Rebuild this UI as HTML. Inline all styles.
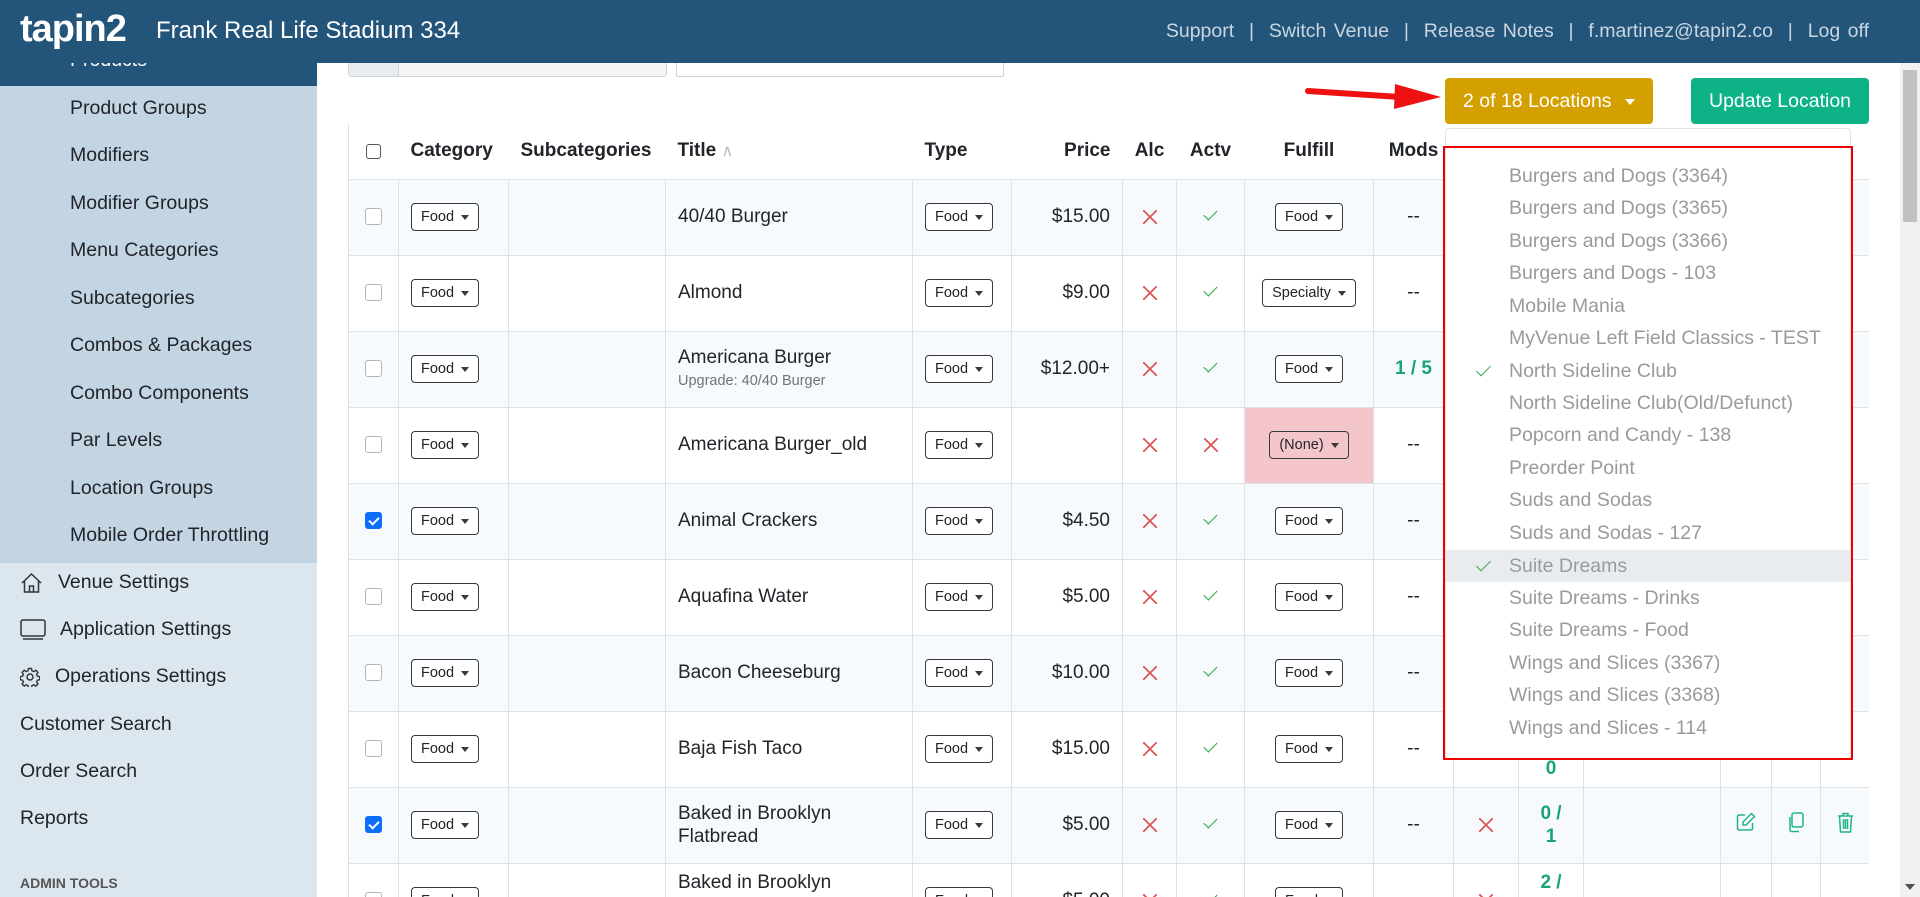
<!DOCTYPE html>
<html><head><meta charset="utf-8">
<style>
*{box-sizing:border-box;margin:0;padding:0}
html,body{width:1920px;height:897px;overflow:hidden;background:#fff;font-family:"Liberation Sans",Arial,sans-serif;color:#212529}
#wrap{position:relative;width:1920px;height:897px;overflow:hidden}
.abs{position:absolute}
#hdr{left:0;top:0;width:1920px;height:63px;background:#235479;z-index:5}
#logo{left:20px;top:8px;font-size:38px;font-weight:bold;color:#fff;letter-spacing:-1px}
#venue{left:156px;top:17px;font-size:24px;color:#fff}
#nav{right:51px;top:20px;font-size:19.5px;color:#c9d6e1;word-spacing:2px}
#side{left:0;top:63px;width:317px;height:834px;background:#dce6ef}
#side .sub{position:absolute;left:0;top:23px;width:317px;height:477px;background:#c3d4e2}
#side .act{position:absolute;left:0;top:0;width:317px;height:23px;background:#235479;overflow:hidden}
.si{position:absolute;font-size:19.5px;color:#212529;white-space:nowrap}
#tw{position:absolute;left:348px;top:124px;width:1521px;height:773px;overflow:hidden}
table{border-collapse:collapse;table-layout:fixed;width:1521px;font-size:19px}
td,th{border:1px solid #dee2e6;height:76px;padding:0 12px;vertical-align:middle;white-space:nowrap;overflow:hidden}
th{height:55px;border-left:none;border-right:none;border-top:none;text-align:left;font-weight:bold;font-size:19px}
tr.o td{background:#f7fafd}
.c{text-align:center}.r{text-align:right}
.cb{display:inline-block;width:17px;height:17px;border:1px solid #adb5bd;border-radius:3px;background:#fff;vertical-align:middle}
.cb.on{background:#0d6efd;border-color:#0d6efd;position:relative}
.cb.on:after{content:"";position:absolute;left:5px;top:2px;width:4px;height:8px;border:solid #fff;border-width:0 2px 2px 0;transform:rotate(45deg)}
.sel{display:inline-block;border:1px solid #343a40;border-radius:4px;font-size:14.5px;padding:4px 9px;line-height:18px;background:#fff}
.sel:after{content:"";display:inline-block;margin-left:7px;vertical-align:middle;border-left:4px solid transparent;border-right:4px solid transparent;border-top:5px solid #343a40}
.x:before{content:"";display:inline-block;width:14px;height:14px;vertical-align:middle;background:linear-gradient(45deg,transparent 46%,#e05656 46%,#e05656 54%,transparent 54%),linear-gradient(-45deg,transparent 46%,#e05656 46%,#e05656 54%,transparent 54%)}
.ck:before{content:"";display:inline-block;width:6px;height:12px;border:solid #28a745;border-width:0 1.5px 1.5px 0;transform:rotate(45deg);margin-top:-6px;vertical-align:middle}
.g{color:#1aa37a;font-weight:bold;font-size:19px}
.sm{font-size:14.5px;color:#6c757d}
#dd{left:1445px;top:128px;width:406px;height:631px;background:#fff;border:1px solid #dee2e6;border-radius:4px;z-index:4}
#red{left:1443px;top:146px;width:410px;height:614px;border:2.5px solid #ee0000;z-index:6}
.di{position:absolute;left:63px;font-size:19.5px;color:#9a9a9a;white-space:nowrap;line-height:32px;height:32px}
.dck{position:absolute;left:34px;top:0;width:7px;height:14px;border:solid #28a745;border-width:0 1.5px 1.5px 0;transform:rotate(45deg)}
</style></head><body><div id="wrap">

<div id="hdr" class="abs">
 <div id="logo" class="abs">tapin2</div>
 <div id="venue" class="abs">Frank Real Life Stadium 334</div>
 <div id="nav" class="abs">Support &nbsp;|&nbsp; Switch Venue &nbsp;|&nbsp; Release Notes &nbsp;|&nbsp; f.martinez@tapin2.co &nbsp;|&nbsp; Log off</div>
</div>

<div id="side" class="abs">
 <div class="act"><div class="si" style="left:70px;top:-14px;color:#fff">Products</div></div>
 <div class="sub"></div>
 <div class="si" style="left:70px;top:34px">Product Groups</div>
 <div class="si" style="left:70px;top:81px">Modifiers</div>
 <div class="si" style="left:70px;top:129px">Modifier Groups</div>
 <div class="si" style="left:70px;top:176px">Menu Categories</div>
 <div class="si" style="left:70px;top:224px">Subcategories</div>
 <div class="si" style="left:70px;top:271px">Combos &amp; Packages</div>
 <div class="si" style="left:70px;top:319px">Combo Components</div>
 <div class="si" style="left:70px;top:366px">Par Levels</div>
 <div class="si" style="left:70px;top:414px">Location Groups</div>
 <div class="si" style="left:70px;top:461px">Mobile Order Throttling</div>
 <svg class="abs" style="left:20px;top:509px" width="23" height="22" viewBox="0 0 23 22" fill="none" stroke="#333" stroke-width="1.5"><path d="M2 11 L11.5 2 L21 11 M4.5 9 V20 H18.5 V9 M9.5 20 V14 H13.5 V20"/></svg>
 <div class="si" style="left:58px;top:508px">Venue Settings</div>
 <svg class="abs" style="left:20px;top:556px" width="26" height="22" viewBox="0 0 26 22" fill="none" stroke="#333" stroke-width="1.5"><rect x="1" y="1" width="24" height="16" rx="2"/><path d="M3 20 H23"/></svg>
 <div class="si" style="left:60px;top:555px">Application Settings</div>
 <svg class="abs" style="left:20px;top:604px" width="20" height="20" viewBox="0 0 20 20" fill="none" stroke="#333" stroke-width="1.4"><circle cx="10" cy="10" r="3"/><path d="M8.5 1.5h3l.5 2.3 1.8.8 2-1.3 2.1 2.1-1.3 2 .8 1.8 2.3.5v3l-2.3.5-.8 1.8 1.3 2-2.1 2.1-2-1.3-1.8.8-.5 2.3h-3l-.5-2.3-1.8-.8-2 1.3-2.1-2.1 1.3-2-.8-1.8-2.3-.5v-3l2.3-.5.8-1.8-1.3-2 2.1-2.1 2 1.3 1.8-.8z"/></svg>
 <div class="si" style="left:55px;top:602px">Operations Settings</div>
 <div class="si" style="left:20px;top:650px">Customer Search</div>
 <div class="si" style="left:20px;top:697px">Order Search</div>
 <div class="si" style="left:20px;top:744px">Reports</div>
 <div class="si" style="left:20px;top:812px;font-size:14px;font-weight:bold;color:#555">ADMIN TOOLS</div>
</div>

<div class="abs" style="left:348px;top:49px;width:319px;height:28px;border:1px solid #ced4da;border-radius:4px;background:#f5f5f5;overflow:hidden"><div style="width:50px;height:28px;background:#e9ecef;border-right:1px solid #ced4da"></div></div>
<div class="abs" style="left:676px;top:49px;width:328px;height:28px;border:1px solid #ced4da;border-radius:2px;background:#fff"></div>

<svg class="abs" style="left:1300px;top:82px" width="150" height="30" viewBox="0 0 150 30"><path d="M8 9 L100 15" stroke="#ee1111" stroke-width="6" stroke-linecap="round"/><path d="M95 2 L141 15 L94 27 Z" fill="#ee1111"/></svg>
<div class="abs" style="left:1445px;top:78px;width:208px;height:46px;background:#d4a000;border-radius:4px;color:#fff;font-size:19.5px;line-height:46px;text-align:center">2 of 18 Locations <span style="display:inline-block;margin-left:8px;vertical-align:middle;border-left:5px solid transparent;border-right:5px solid transparent;border-top:6px solid #fff"></span></div>
<div class="abs" style="left:1691px;top:78px;width:178px;height:46px;background:#0db387;border-radius:4px;color:#fff;font-size:19.5px;line-height:46px;text-align:center">Update Location</div>

<div id="tw"><table>
<colgroup><col style="width:50px"><col style="width:110px"><col style="width:157px"><col style="width:247px"><col style="width:99px"><col style="width:111px"><col style="width:54px"><col style="width:68px"><col style="width:129px"><col style="width:80px"><col style="width:65px"><col style="width:65px"><col style="width:137px"><col style="width:51px"><col style="width:49px"><col style="width:49px"></colgroup>
<tr><th class="c" style="border-left:1px solid #dee2e6"><span class="cb" style="width:15px;height:15px;border-color:#555"></span></th><th>Category</th><th>Subcategories</th><th>Title <span style="color:#bbb;font-weight:normal;font-size:16px">&#x2227;</span></th><th>Type</th><th class="r">Price</th><th class="c">Alc</th><th class="c">Actv</th><th class="c">Fulfill</th><th class="c">Mods</th><th></th><th></th><th></th><th></th><th></th><th></th></tr>

<tr class="o"><td class="c"><span class="cb"></span></td><td><span class="sel">Food</span></td><td></td><td>40/40 Burger</td><td><span class="sel">Food</span></td><td class="r">$15.00</td><td class="c x"></td><td class="c ck"></td><td class="c"><span class="sel">Food</span></td><td class="c">--</td><td class="c x"></td><td class="c g">0</td><td></td><td></td><td></td><td></td></tr>
<tr><td class="c"><span class="cb"></span></td><td><span class="sel">Food</span></td><td></td><td>Almond</td><td><span class="sel">Food</span></td><td class="r">$9.00</td><td class="c x"></td><td class="c ck"></td><td class="c"><span class="sel">Specialty</span></td><td class="c">--</td><td></td><td></td><td></td><td></td><td></td><td></td></tr>
<tr class="o"><td class="c"><span class="cb"></span></td><td><span class="sel">Food</span></td><td></td><td style="line-height:22px">Americana Burger<br><span class="sm">Upgrade: 40/40 Burger</span></td><td><span class="sel">Food</span></td><td class="r">$12.00+</td><td class="c x"></td><td class="c ck"></td><td class="c"><span class="sel">Food</span></td><td class="c g">1 / 5</td><td></td><td></td><td></td><td></td><td></td><td></td></tr>
<tr><td class="c"><span class="cb"></span></td><td><span class="sel">Food</span></td><td></td><td>Americana Burger_old</td><td><span class="sel">Food</span></td><td class="r"></td><td class="c x"></td><td class="c x"></td><td class="c" style="background:#f4c6cb"><span class="sel" style="background:#f4c6cb">(None)</span></td><td class="c">--</td><td></td><td></td><td></td><td></td><td></td><td></td></tr>
<tr class="o"><td class="c"><span class="cb on"></span></td><td><span class="sel">Food</span></td><td></td><td>Animal Crackers</td><td><span class="sel">Food</span></td><td class="r">$4.50</td><td class="c x"></td><td class="c ck"></td><td class="c"><span class="sel">Food</span></td><td class="c">--</td><td></td><td></td><td></td><td></td><td></td><td></td></tr>
<tr><td class="c"><span class="cb"></span></td><td><span class="sel">Food</span></td><td></td><td>Aquafina Water</td><td><span class="sel">Food</span></td><td class="r">$5.00</td><td class="c x"></td><td class="c ck"></td><td class="c"><span class="sel">Food</span></td><td class="c">--</td><td></td><td></td><td></td><td></td><td></td><td></td></tr>
<tr class="o"><td class="c"><span class="cb"></span></td><td><span class="sel">Food</span></td><td></td><td>Bacon Cheeseburg</td><td><span class="sel">Food</span></td><td class="r">$10.00</td><td class="c x"></td><td class="c ck"></td><td class="c"><span class="sel">Food</span></td><td class="c">--</td><td></td><td></td><td></td><td></td><td></td><td></td></tr>
<tr><td class="c"><span class="cb"></span></td><td><span class="sel">Food</span></td><td></td><td>Baja Fish Taco</td><td><span class="sel">Food</span></td><td class="r">$15.00</td><td class="c x"></td><td class="c ck"></td><td class="c"><span class="sel">Food</span></td><td class="c">--</td><td class="c x"></td><td class="c g" style="padding-top:40px">0</td><td class="sm">10/07/20</td><td></td><td></td><td></td></tr>
<tr class="o"><td class="c"><span class="cb on"></span></td><td><span class="sel">Food</span></td><td></td><td style="line-height:23px">Baked in Brooklyn<br>Flatbread</td><td><span class="sel">Food</span></td><td class="r">$5.00</td><td class="c x"></td><td class="c ck"></td><td class="c"><span class="sel">Food</span></td><td class="c">--</td><td class="c x"></td><td class="c g" style="line-height:23px">0 /<br>1</td><td></td>
<td class="c"><svg width="20" height="20" viewBox="0 0 20 20" fill="none" stroke="#20b486" stroke-width="1.5"><path d="M9 3H3a1.5 1.5 0 0 0-1.5 1.5v12A1.5 1.5 0 0 0 3 18h12a1.5 1.5 0 0 0 1.5-1.5V11"/><path d="M15.5 1.5l3 3L10 13H7v-3z"/></svg></td>
<td class="c"><svg width="18" height="21" viewBox="0 0 18 21" fill="none" stroke="#20b486" stroke-width="1.5"><rect x="5" y="1" width="11" height="14" rx="2"/><path d="M3 5v13a1.5 1.5 0 0 0 1.5 1.5H12"/></svg></td>
<td class="c"><svg width="17" height="21" viewBox="0 0 17 21" fill="none" stroke="#20b486" stroke-width="1.5"><path d="M1 4h15M6 4V1.5h5V4M2.5 4l1 16h10l1-16M6.5 7v10M8.5 7v10M10.5 7v10"/></svg></td></tr>
<tr><td class="c"><span class="cb"></span></td><td><span class="sel">Food</span></td><td></td><td style="vertical-align:top;padding-top:8px">Baked in Brooklyn</td><td><span class="sel">Food</span></td><td class="r">$5.00</td><td class="c x"></td><td class="c ck"></td><td class="c"><span class="sel">Food</span></td><td class="c">--</td><td class="c x"></td><td class="c g" style="vertical-align:top;padding-top:8px">2 /</td><td></td><td></td><td></td><td></td></tr>
</table></div>

<div id="dd" class="abs">
 <div class="di" style="top:31px">Burgers and Dogs (3364)</div>
 <div class="di" style="top:63px">Burgers and Dogs (3365)</div>
 <div class="di" style="top:96px">Burgers and Dogs (3366)</div>
 <div class="di" style="top:128px">Burgers and Dogs - 103</div>
 <div class="di" style="top:161px">Mobile Mania</div>
 <div class="di" style="top:193px">MyVenue Left Field Classics - TEST</div>
 <div class="abs" style="left:0;top:226px;width:60px;height:32px"><div class="dck" style="top:7px"></div></div><div class="di" style="top:226px">North Sideline Club</div>
 <div class="di" style="top:258px">North Sideline Club(Old/Defunct)</div>
 <div class="di" style="top:290px">Popcorn and Candy - 138</div>
 <div class="di" style="top:323px">Preorder Point</div>
 <div class="di" style="top:355px">Suds and Sodas</div>
 <div class="di" style="top:388px">Suds and Sodas - 127</div>
 <div class="abs" style="left:0;top:421px;width:404px;height:32px;background:#e9ecef"><div class="dck" style="top:7px"></div></div>
 <div class="di" style="top:421px">Suite Dreams</div>
 <div class="di" style="top:453px">Suite Dreams - Drinks</div>
 <div class="di" style="top:485px">Suite Dreams - Food</div>
 <div class="di" style="top:518px">Wings and Slices (3367)</div>
 <div class="di" style="top:550px">Wings and Slices (3368)</div>
 <div class="di" style="top:583px">Wings and Slices - 114</div>
</div>
<div id="red" class="abs"></div>

<div class="abs" style="left:1900px;top:63px;width:20px;height:834px;background:#f1f1f1"></div>
<div class="abs" style="left:1903px;top:70px;width:14px;height:152px;background:#c1c1c1"></div>
<div class="abs" style="left:1905px;top:884px;border-left:5px solid transparent;border-right:5px solid transparent;border-top:6px solid #505050"></div>
</div></body></html>
